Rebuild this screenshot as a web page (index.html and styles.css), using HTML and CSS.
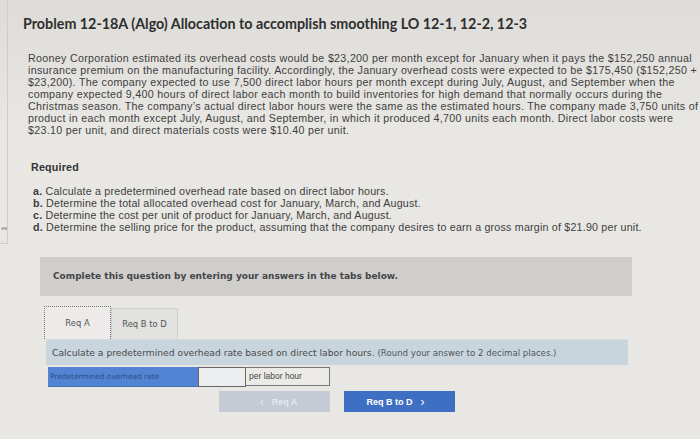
FILE: index.html
```html
<!DOCTYPE html>
<html>
<head>
<meta charset="utf-8">
<link rel="stylesheet" href="styles.css">
</head>
<body>
<div class="page">
  <div class="side"><span class="side-text">es</span></div>
  <div class="content">
    <h1 class="title">Problem 12-18A (Algo) Allocation to accomplish smoothing LO 12-1, 12-2, 12-3</h1>
    <p class="para">Rooney Corporation estimated its overhead costs would be $23,200 per month except for January when it pays the $152,250 annual<br>insurance premium on the manufacturing facility. Accordingly, the January overhead costs were expected to be $175,450 ($152,250 +<br>$23,200). The company expected to use 7,500 direct labor hours per month except during July, August, and September when the<br>company expected 9,400 hours of direct labor each month to build inventories for high demand that normally occurs during the<br>Christmas season. The company’s actual direct labor hours were the same as the estimated hours. The company made 3,750 units of<br>product in each month except July, August, and September, in which it produced 4,700 units each month. Direct labor costs were<br>$23.10 per unit, and direct materials costs were $10.40 per unit.</p>
    <div class="req-head">Required</div>
    <p class="req-list"><b>a.</b> Calculate a predetermined overhead rate based on direct labor hours.<br><b>b.</b> Determine the total allocated overhead cost for January, March, and August.<br><b>c.</b> Determine the cost per unit of product for January, March, and August.<br><b>d.</b> Determine the selling price for the product, assuming that the company desires to earn a gross margin of $21.90 per unit.</p>
    <div class="quiz">
      <div class="notice">Complete this question by entering your answers in the tabs below.</div>
      <div class="tabs">
        <div class="tab active">Req A</div>
        <div class="tab">Req B to D</div>
      </div>
      <div class="instr">Calculate a predetermined overhead rate based on direct labor hours. <span class="hint">(Round your answer to 2 decimal places.)</span></div>
      <div class="answer-row">
        <div class="ans-label">Predetermined overhead rate</div>
        <div class="ans-input"></div>
        <div class="ans-unit">per labor hour</div>
      </div>
      <div class="nav">
        <div class="btn btn-prev"><span class="chev">&lsaquo;</span> Req A</div>
        <div class="btn btn-next">Req B to D <span class="chev">&rsaquo;</span></div>
      </div>
    </div>
  </div>
</div>
</body>
</html>
```
FILE: styles.css
```css
html, body {
  margin: 0;
  padding: 0;
}
body {
  width: 700px;
  height: 439px;
  overflow: hidden;
  background: linear-gradient(180deg, #dedcd8 0%, #e8e7e3 30%, #e8e7e3 100%);
  font-family: "Liberation Sans", Arial, sans-serif;
  color: #3a3a3a;
}
.page {
  display: flex;
  align-items: flex-start;
}
.side {
  width: 8px;
  height: 244px;
  border-right: 1px solid #cfcdc9;
  border-bottom: 1px solid #cfcdc9;
  overflow: hidden;
  display: flex;
  flex-direction: column;
  justify-content: flex-end;
  align-items: flex-end;
  padding-bottom: 12px;
  box-sizing: border-box;
}
.side-text {
  font-size: 6px;
  color: #777;
  letter-spacing: -0.3px;
}
.content {
  flex: 1;
  padding-left: 15px;
  padding-top: 15px;
}
.title {
  margin: 0;
  font-family: Lato, "Open Sans", sans-serif;
  font-size: 14.3px;
  font-weight: 700;
  color: #2e2e2e;
  line-height: 18px;
}
.para {
  margin: 19px 0 0 5px;
  white-space: nowrap;
  font-size: 10.7px;
  letter-spacing: 0.3px;
  line-height: 12px;
  color: #3e3e3e;
}
.req-head {
  margin: 25px 0 0 8px;
  font-size: 10.7px;
  letter-spacing: 0.2px;
  font-weight: 700;
  color: #333;
}
.req-list {
  margin: 12px 0 0 10px;
  white-space: nowrap;
  font-size: 10.7px;
  letter-spacing: 0.2px;
  line-height: 12px;
  color: #3e3e3e;
}
.req-list b {
  font-weight: 700;
}
.quiz {
  margin: 24px 0 0 17px;
  width: 592px;
}
.notice {
  background: #cfcecc;
  height: 39px;
  box-sizing: border-box;
  padding: 14px 0 0 13px;
  font-family: "DejaVu Sans", Verdana, sans-serif;
  font-weight: 700;
  font-size: 9px;
  color: #454545;
}
.tabs {
  display: flex;
  margin: 10px 0 0 4px;
  height: 33px;
  align-items: flex-end;
}
.tab {
  width: 67px;
  height: 31px;
  box-sizing: border-box;
  border: 1px solid #cfcfcf;
  border-bottom: none;
  background: #e2e2e1;
  font-family: "DejaVu Sans", Verdana, sans-serif;
  font-size: 8.4px;
  color: #555;
  display: flex;
  align-items: center;
  justify-content: center;
}
.tab.active {
  height: 33px;
  background: #ecebe9;
  border: 1px dotted #777;
  border-bottom: none;
}
.instr {
  margin-left: 6px;
  width: 582px;
  height: 26px;
  box-sizing: border-box;
  background: #c9d5dd;
  border-top: 1px solid #d6dde2;
  padding: 7px 0 0 6px;
  font-family: "DejaVu Sans", Verdana, sans-serif;
  font-size: 9.2px;
  color: #4a4a4a;
  white-space: nowrap;
}
.hint {
  color: #4d5660;
  font-size: 8.6px;
}
.answer-row {
  display: flex;
  margin: 2px 0 0 8px;
  height: 20px;
}
.ans-label {
  width: 150px;
  background: #5284d3;
  color: #2c4f86;
  font-family: "DejaVu Sans", Verdana, sans-serif;
  font-size: 7.4px;
  display: flex;
  align-items: center;
  padding-left: 2px;
  box-sizing: border-box;
  border-bottom: 1px solid #4a74b8;
}
.ans-input {
  width: 48px;
  height: 20px;
  box-sizing: border-box;
  border: 1px solid #666;
  background: #eceef0;
}
.ans-unit {
  width: 84px;
  height: 19px;
  box-sizing: border-box;
  border: 1px solid #777;
  border-left: none;
  background: #ecebe8;
  font-family: "Liberation Sans", Arial, sans-serif;
  font-size: 8.5px;
  color: #444;
  padding: 3px 0 0 3px;
}
.nav {
  display: flex;
  margin: 4px 0 0 179px;
  gap: 14px;
}
.btn {
  height: 21px;
  width: 111px;
  display: flex;
  align-items: center;
  justify-content: center;
  font-family: "Liberation Sans", Arial, sans-serif;
  font-weight: 700;
  font-size: 9px;
}
.btn-prev {
  background: #c5cbd4;
  color: #e6e9ee;
}
.btn-next {
  background: #3f6fc3;
  color: #ffffff;
}
.chev {
  font-size: 12px;
  margin: 0 8px;
  font-weight: 400;
  line-height: 1;
}
```
